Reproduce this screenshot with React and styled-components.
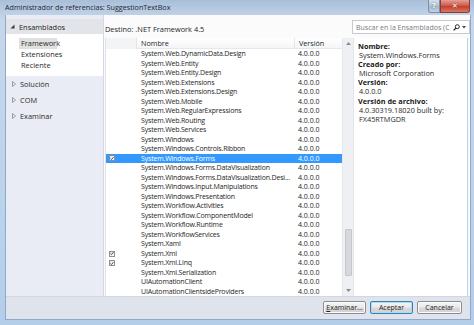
import React from 'react';
import styled, { createGlobalStyle } from 'styled-components';

const Global = createGlobalStyle`
  html, body { margin: 0; padding: 0; }
  body {
    width: 474px; height: 325px; overflow: hidden;
    font-family: "Open Sans", "Noto Sans", sans-serif;
    color: #1b1b1b;
  }
  * { box-sizing: border-box; }
`;

const Window = styled.div`
  width: 474px;
  height: 325px;
  display: flex;
  flex-direction: column;
  padding: 0 3px 5px 5px;
  background: linear-gradient(180deg, #a9bfd9 0%, #c6d7eb 6%, #bcd3ec 60%, #b4cde9 100%);
`;

const TitleBar = styled.div`
  height: 15px;
  display: flex;
  align-items: flex-start;
`;

const Title = styled.div`
  font-size: 7.2px;
  line-height: 15px;
  color: #1d2633;
  white-space: nowrap;
`;

const Captions = styled.div`
  margin-left: auto;
  margin-right: 1px;
  display: flex;
  height: 13px;
`;

const CapButton = styled.div`
  height: 13px;
  width: ${p => p.$w}px;
  display: flex;
  align-items: center;
  justify-content: center;
  font-family: "DejaVu Sans", sans-serif;
  font-size: 7px;
  font-weight: bold;
  color: #fff;
  border: 1px solid ${p => (p.$close ? '#8a3b3b' : '#7c8ea6')};
  border-top: none;
  border-radius: ${p => (p.$close ? '0 0 3px 0' : '0 0 0 3px')};
  background: ${p =>
    p.$close
      ? 'linear-gradient(180deg, #e3a095 0%, #cf5d4d 45%, #c4402e 55%, #d77a62 100%)'
      : 'linear-gradient(180deg, #d6e0ec 0%, #b8c7da 45%, #a5b7ce 55%, #c3d2e4 100%)'};
  text-shadow: 0 0 2px rgba(0,0,0,0.5);
`;

const Client = styled.div`
  flex: 1;
  display: flex;
  flex-direction: column;
  background: #fbfbfc;
  border: 1px solid #8ea9c9;
  border-top: none;
`;

const Main = styled.div`
  flex: 1;
  display: flex;
  min-height: 0;
`;

const LeftPanel = styled.div`
  width: 98px;
  background: #e9ecf5;
  border-right: 1px solid #d3d8e4;
  padding-top: 4px;
  display: flex;
  flex-direction: column;
`;

const GroupHeader = styled.div`
  height: 15px;
  display: flex;
  align-items: center;
  padding-left: 4px;
  background: #e2e4ea;
  font-size: 7.4px;
  color: #1e1e1e;
  gap: 4px;
`;

const SubList = styled.div`
  background: #fff;
  padding: 4px 0 0 13px;
  height: 42px;
  display: flex;
  flex-direction: column;
`;

const SubItem = styled.div`
  height: 11px;
  line-height: 11px;
  font-size: 7.4px;
  padding: 0 2px;
  align-self: flex-start;
  width: ${p => (p.$active ? '38px' : 'auto')};
  background: ${p => (p.$active ? '#e0e0e0' : 'transparent')};
  color: #2a2a2a;
`;

const NavItem = styled.div`
  height: 16px;
  display: flex;
  align-items: center;
  padding-left: 6px;
  gap: 4px;
  font-size: 7.4px;
  color: #2a2a2a;
`;

const Content = styled.div`
  flex: 1;
  display: flex;
  flex-direction: column;
  padding-left: 1px;
`;

const TopRow = styled.div`
  height: 23px;
  display: flex;
  align-items: flex-start;
`;

const Destino = styled.div`
  font-size: 7.4px;
  padding-top: 9px;
  color: #1e1e1e;
`;

const Search = styled.div`
  margin-left: auto;
  margin-top: 5px;
  width: 118px;
  height: 14px;
  background: #fff;
  border: 1px solid #c5cad3;
  display: flex;
  align-items: center;
  padding-left: 3px;
  font-size: 7px;
  color: #7a7a7a;
  white-space: nowrap;
  overflow: hidden;
`;

const SearchText = styled.span`
  flex: 1;
  overflow: hidden;
`;

const SearchIcons = styled.span`
  display: flex;
  align-items: center;
  gap: 2px;
  padding: 0 3px 0 2px;
`;

const BottomRow = styled.div`
  flex: 1;
  display: flex;
  min-height: 0;
`;

const ListBox = styled.div`
  width: 248px;
  display: flex;
  border-left: 1px solid #dfe2e8;
  background: #fff;
`;

const ListMain = styled.div`
  flex: 1;
  min-width: 0;
  display: flex;
  flex-direction: column;
`;

const Grid = styled.div`
  display: grid;
  grid-template-columns: 31px 158px minmax(0, 1fr);
  align-items: center;
`;

const HeaderRow = styled(Grid)`
  height: 11px;
  background: linear-gradient(180deg, #ffffff 0%, #f4f5f7 100%);
  border-bottom: 1px solid #e6e8ec;
`;

const HeaderCell = styled.div`
  height: 11px;
  line-height: 11px;
  font-size: 7.2px;
  padding-left: 4px;
  color: #1e1e1e;
  border-right: ${p => (p.$sep ? '1px solid #e3e5ea' : 'none')};
  background: ${p => (p.$shade ? '#f3f4f6' : 'transparent')};
`;

const Row = styled(Grid)`
  height: 9.52px;
  font-size: 7px;
  letter-spacing: -0.18px;
  line-height: 9.52px;
  background: ${p => (p.$selected ? '#3399ff' : 'transparent')};
  color: ${p => (p.$selected ? '#ffffff' : '#1e1e1e')};
`;

const CheckCell = styled.div`
  display: flex;
  align-items: center;
  padding-left: 3px;
`;

const Box = styled.div`
  width: 6px;
  height: 6px;
  border: 1px solid #8e8f8f;
  background: linear-gradient(135deg, #e4e4e4, #ffffff);
  display: flex;
  align-items: center;
  justify-content: center;
`;

const NameCell = styled.div`
  padding-left: 4px;
  min-width: 0;
  white-space: nowrap;
  overflow: hidden;
`;

const VerCell = styled.div`
  padding-left: 3px;
  letter-spacing: 0;
`;

const ScrollBar = styled.div`
  width: 11px;
  display: flex;
  flex-direction: column;
  background: #eef0f3;
  border-left: 1px solid #e6e8ec;
`;

const Arrow = styled.div`
  height: 11px;
  display: flex;
  align-items: center;
  justify-content: center;
`;

const Track = styled.div`
  flex: 1;
  display: flex;
  flex-direction: column;
  justify-content: flex-end;
  align-items: center;
  padding-bottom: 9px;
`;

const Thumb = styled.div`
  width: 7px;
  height: 47px;
  background: #d6d8dc;
  border: 1px solid #c3c6cc;
  border-radius: 1px;
`;

const Details = styled.div`
  width: 115px;
  background: #fff;
  border-left: 1px solid #e2e5ea;
  border-right: 1px solid #bcd0e8;
  padding: 4px 0 0 4px;
  font-size: 7.3px;
  line-height: 9.1px;
`;

const Label = styled.div`
  font-weight: 700;
  color: #1a1a1a;
`;

const Value = styled.div`
  padding-left: 1px;
  color: #2a2a2a;
`;

const ButtonBar = styled.div`
  height: 23px;
  background: #dfe3ec;
  border-top: 1px solid #d2d7e0;
  display: flex;
  justify-content: flex-end;
  align-items: flex-start;
  padding: 4px 8px 0 0;
  gap: 4px;
`;

const Button = styled.div`
  width: ${p => p.$w}px;
  height: 13px;
  border: 1px solid ${p => (p.$default ? '#3c7fb1' : '#8d8d8d')};
  border-radius: 2px;
  background: linear-gradient(180deg, #f5f5f5 0%, #eaeaea 48%, #dadada 52%, #d2d2d2 100%);
  box-shadow: inset 0 0 0 1px ${p => (p.$default ? '#a8dcf5' : '#fbfbfb')};
  font-size: 7px;
  display: flex;
  align-items: center;
  justify-content: center;
  color: #1e1e1e;
`;

const U = styled.span` text-decoration: underline; `;

const rows = [
  { n: 'System.Web.DynamicData.Design' },
  { n: 'System.Web.Entity' },
  { n: 'System.Web.Entity.Design' },
  { n: 'System.Web.Extensions' },
  { n: 'System.Web.Extensions.Design' },
  { n: 'System.Web.Mobile' },
  { n: 'System.Web.RegularExpressions' },
  { n: 'System.Web.Routing' },
  { n: 'System.Web.Services' },
  { n: 'System.Windows' },
  { n: 'System.Windows.Controls.Ribbon' },
  { n: 'System.Windows.Forms', c: true, s: true },
  { n: 'System.Windows.Forms.DataVisualization' },
  { n: 'System.Windows.Forms.DataVisualization.Desi...' },
  { n: 'System.Windows.Input.Manipulations' },
  { n: 'System.Windows.Presentation' },
  { n: 'System.Workflow.Activities' },
  { n: 'System.Workflow.ComponentModel' },
  { n: 'System.Workflow.Runtime' },
  { n: 'System.WorkflowServices' },
  { n: 'System.Xaml' },
  { n: 'System.Xml', c: true },
  { n: 'System.Xml.Linq', c: true },
  { n: 'System.Xml.Serialization' },
  { n: 'UIAutomationClient' },
  { n: 'UIAutomationClientsideProviders' },
];

const Check = () => (
  <Box>
    <svg width="5" height="5" viewBox="0 0 5 5">
      <path d="M0.6 2.6 L1.9 3.9 L4.4 0.8" fill="none" stroke="#2b3f66" strokeWidth="1.1" />
    </svg>
  </Box>
);

const Expanded = () => (
  <svg width="5" height="5" viewBox="0 0 5 5">
    <path d="M4.5 0.5 L4.5 4.5 L0.5 4.5 Z" fill="#3a3a3a" />
  </svg>
);

const Collapsed = () => (
  <svg width="4" height="6" viewBox="0 0 4 6">
    <path d="M0.5 0.5 L3.5 3 L0.5 5.5 Z" fill="none" stroke="#8a8a8a" strokeWidth="0.8" />
  </svg>
);

const Tri = ({ up }) => (
  <svg width="5" height="3" viewBox="0 0 5 3">
    <path d={up ? 'M0 3 L2.5 0 L5 3 Z' : 'M0 0 L2.5 3 L5 0 Z'} fill="#8a8d92" />
  </svg>
);

export default function App() {
  return (
    <>
      <Global />
      <Window>
        <TitleBar>
          <Title>Administrador de referencias: SuggestionTextBox</Title>
          <Captions>
            <CapButton $w={12}>?</CapButton>
            <CapButton $w={30} $close>✕</CapButton>
          </Captions>
        </TitleBar>
        <Client>
          <Main>
            <LeftPanel>
              <GroupHeader>
                <Expanded />
                <span>Ensamblados</span>
              </GroupHeader>
              <SubList>
                <SubItem $active>Framework</SubItem>
                <SubItem>Extensiones</SubItem>
                <SubItem>Reciente</SubItem>
              </SubList>
              <NavItem><Collapsed /><span>Solución</span></NavItem>
              <NavItem><Collapsed /><span>COM</span></NavItem>
              <NavItem><Collapsed /><span>Examinar</span></NavItem>
            </LeftPanel>
            <Content>
              <TopRow>
                <Destino>Destino: .NET Framework 4.5</Destino>
                <Search>
                  <SearchText>Buscar en la Ensamblados (C</SearchText>
                  <SearchIcons>
                    <svg width="7" height="7" viewBox="0 0 7 7">
                      <circle cx="4.3" cy="2.7" r="2" fill="none" stroke="#2a2a2a" strokeWidth="1" />
                      <path d="M3 4 L0.6 6.4" stroke="#2a2a2a" strokeWidth="1.3" />
                    </svg>
                    <svg width="4" height="3" viewBox="0 0 4 3">
                      <path d="M0 0 L2 2.5 L4 0 Z" fill="#444" />
                    </svg>
                  </SearchIcons>
                </Search>
              </TopRow>
              <BottomRow>
                <ListBox>
                  <ListMain>
                    <HeaderRow>
                      <HeaderCell $sep $shade />
                      <HeaderCell $sep>Nombre</HeaderCell>
                      <HeaderCell>Versión</HeaderCell>
                    </HeaderRow>
                    {rows.map(r => (
                      <Row key={r.n} $selected={r.s}>
                        <CheckCell>{r.c ? <Check /> : null}</CheckCell>
                        <NameCell>{r.n}</NameCell>
                        <VerCell>4.0.0.0</VerCell>
                      </Row>
                    ))}
                  </ListMain>
                  <ScrollBar>
                    <Arrow><Tri up /></Arrow>
                    <Track><Thumb /></Track>
                    <Arrow><Tri /></Arrow>
                  </ScrollBar>
                </ListBox>
                <Details>
                  <Label>Nombre:</Label>
                  <Value>System.Windows.Forms</Value>
                  <Label>Creado por:</Label>
                  <Value>Microsoft Corporation</Value>
                  <Label>Versión:</Label>
                  <Value>4.0.0.0</Value>
                  <Label>Versión de archivo:</Label>
                  <Value>4.0.30319.18020 built by:</Value>
                  <Value>FX45RTMGDR</Value>
                </Details>
              </BottomRow>
            </Content>
          </Main>
          <ButtonBar>
            <Button $w={43}><span><U>E</U>xaminar...</span></Button>
            <Button $w={43} $default>Aceptar</Button>
            <Button $w={45}>Cancelar</Button>
          </ButtonBar>
        </Client>
      </Window>
    </>
  );
}
